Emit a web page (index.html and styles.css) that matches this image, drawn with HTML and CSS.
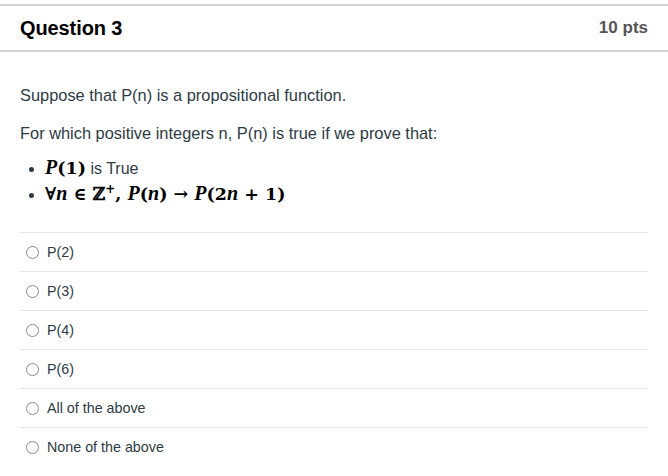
FILE: index.html
```html
<!DOCTYPE html>
<html>
<head>
<meta charset="utf-8">
<link rel="stylesheet" href="styles.css">
</head>
<body>
<div class="question">
  <div class="header">
    <span class="title">Question 3</span>
    <span class="pts">10 pts</span>
  </div>
  <div class="text">
    <p class="p1">Suppose that P(n) is a propositional function.</p>
    <p class="p2">For which positive integers n, P(n) is true if we prove that:</p>
    <ul class="conds">
      <li><span class="m">P</span><span class="mu">(1)</span> is True</li>
      <li><span class="mu">∀</span><span class="m">n</span><span class="mu"> ∈ ℤ<sup>+</sup>, </span><span class="m">P</span><span class="mu">(</span><span class="m">n</span><span class="mu">) → </span><span class="m">P</span><span class="mu">(2</span><span class="m">n</span><span class="mu"> + 1)</span></li>
    </ul>
  </div>
  <div class="answers">
    <div class="answer"><span class="radio"></span><span>P(2)</span></div>
    <div class="answer"><span class="radio"></span><span>P(3)</span></div>
    <div class="answer"><span class="radio"></span><span>P(4)</span></div>
    <div class="answer"><span class="radio"></span><span>P(6)</span></div>
    <div class="answer"><span class="radio"></span><span>All of the above</span></div>
    <div class="answer"><span class="radio"></span><span>None of the above</span></div>
  </div>
</div>
</body>
</html>
```
FILE: styles.css
```css
html, body {
  margin: 0;
  padding: 0;
  background: #fff;
}
body {
  font-family: "Liberation Sans", Arial, sans-serif;
  color: #2d3b45;
}
.question {
  margin-top: 4px;
}
.header {
  height: 44px;
  border-top: 2px solid #d4d4d4;
  border-bottom: 2px solid #d4d4d4;
  padding: 0 20px;
  display: flex;
  justify-content: space-between;
  align-items: center;
}
.title {
  font-size: 20px;
  font-weight: bold;
  color: #000;
  letter-spacing: -0.1px;
}
.pts {
  font-size: 17px;
  font-weight: bold;
  color: #555;
}
.text {
  padding: 0 20px;
}
.text p {
  margin: 0;
  font-size: 16.4px;
  line-height: 20px;
}
.p1 {
  padding-top: 33px;
}
.p2 {
  padding-top: 18px;
}
.conds {
  margin: 12px 0 0 0;
  padding: 0 0 0 25px;
  font-size: 16px;
  line-height: 24px;
}
.m {
  font-family: "Liberation Serif", "DejaVu Serif", serif;
  font-style: italic;
  font-weight: bold;
  font-size: 20px;
  color: #000;
}
.mu {
  font-family: "DejaVu Serif", "Liberation Serif", serif;
  font-weight: bold;
  font-size: 17.5px;
  color: #000;
}
.mu sup {
  font-size: 12px;
  line-height: 0;
}
.answers {
  margin: 25px 20px 0 20px;
}
.answer {
  border-top: 1px solid #e6e6e6;
  height: 38px;
  display: flex;
  align-items: center;
  font-size: 14.3px;
  color: #2d3b45;
}
.radio {
  border: 1px solid #8a8a8a;
  border-radius: 50%;
  margin: 0 8px 0 6px;
  box-sizing: border-box;
  width: 13px;
  height: 13px;
}
```
